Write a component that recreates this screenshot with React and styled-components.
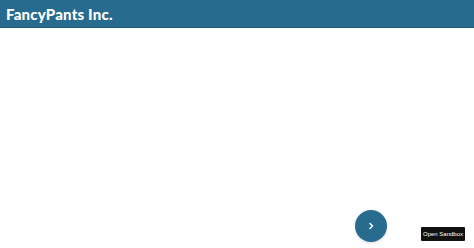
import { createGlobalStyle, styled } from "styled-components";

const GlobalStyle = createGlobalStyle`
  html, body {
    margin: 0;
    padding: 0;
    background: #ffffff;
    font-family: "Open Sans", "Liberation Sans", sans-serif;
  }
`;

const Page = styled.div`
  width: 474px;
  height: 248px;
  position: relative;
  overflow: hidden;
`;

const Header = styled.header`
  height: 27px;
  background: #276b8e;
  border-bottom: 1px solid #1f5a78;
  display: flex;
  align-items: center;
  padding: 0 6px;
`;

const Brand = styled.h1`
  margin: 0;
  color: #ffffff;
  font-family: "Lato", "Open Sans", sans-serif;
  font-weight: 900;
  font-size: 15px;
  letter-spacing: 0.2px;
`;

const Fab = styled.button`
  position: absolute;
  left: 355px;
  top: 210px;
  width: 32px;
  height: 32px;
  border-radius: 50%;
  border: none;
  background: #276b8e;
  display: flex;
  align-items: center;
  justify-content: center;
  padding: 0;
  box-shadow: 0 1px 3px rgba(0, 0, 0, 0.15);
`;

const SandboxBadge = styled.div`
  position: absolute;
  left: 421px;
  top: 227px;
  width: 44px;
  height: 14px;
  background: #111111;
  color: #ffffff;
  font-family: "Liberation Sans", sans-serif;
  font-size: 6px;
  display: flex;
  align-items: center;
  justify-content: center;
  border-radius: 1px;
`;

export default function App() {
  return (
    <Page>
      <GlobalStyle />
      <Header>
        <Brand>FancyPants Inc.</Brand>
      </Header>
      <Fab aria-label="next">
        <svg width="10" height="10" viewBox="0 0 10 10">
          <path d="M4 2.5 L6.5 5 L4 7.5" fill="none" stroke="#fff" strokeWidth="1.5" strokeLinecap="round" strokeLinejoin="round" />
        </svg>
      </Fab>
      <SandboxBadge>Open Sandbox</SandboxBadge>
    </Page>
  );
}
